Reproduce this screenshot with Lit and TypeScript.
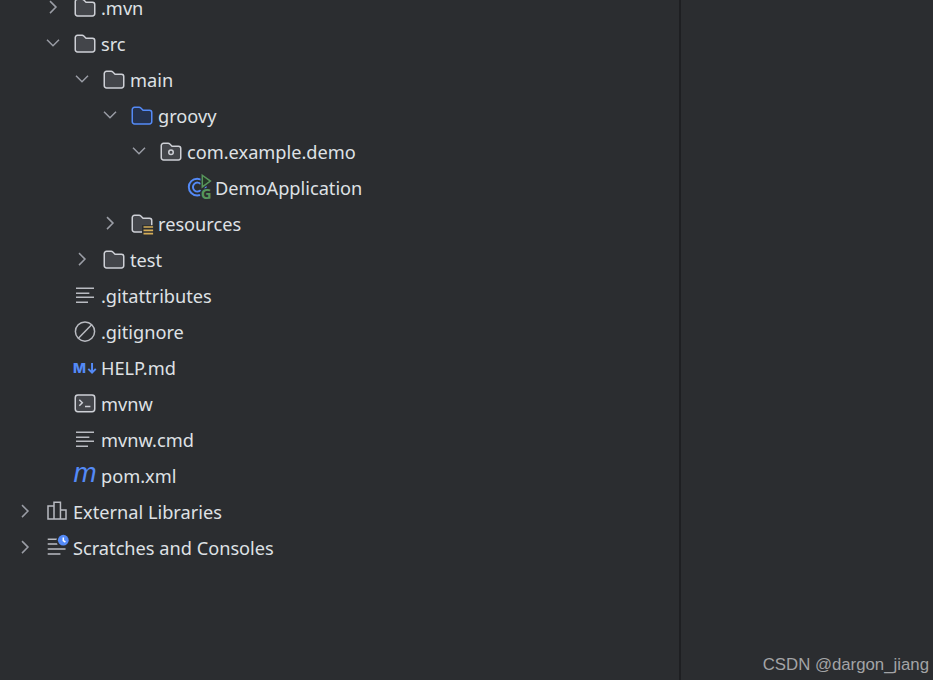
import { LitElement, css, html, svg } from "lit";
import { customElement } from "lit/decorators.js";

const folderPath = "M3 2.2h3.1c.4 0 .8.2 1.1.5l1.5 1.5H13a1.5 1.5 0 0 1 1.5 1.5v6.1a1.5 1.5 0 0 1-1.5 1.5H3a1.5 1.5 0 0 1-1.5-1.5V3.7A1.5 1.5 0 0 1 3 2.2z";

const folder = (extra = svg``, cls = "grey") => svg`<path class=${cls} d=${folderPath}/>${extra}`;

const lines = svg`<path class="line" d="M2 2.9h12M2 6.2h8.9M2 8.9h12M2 12.2h8"/>`;

const icons: Record<string, unknown> = {
  folder: folder(),
  source: folder(svg``, "blue"),
  package: folder(svg`<circle class="ring" cx="8" cy="8.2" r="1.5"/>`),
  resources: svg`${folder()}
    <path class="cut" d="M8 8.8h8v7H8z"/>
    <path class="yellow" d="M9 10h6.4M9 12.2h6.4M9 14.4h6.4"/>`,
  groovy: svg`
    <circle class="c-blue" cx="6.8" cy="7.4" r="5.6"/>
    <path class="c-blue" d="M9.2 5.4a3 3 0 1 0 0 4"/>
    <path class="green-cut" d="M10.2-.5l5.4 3.9-5.4 3.9z"/>
    <circle class="cut" cx="12.8" cy="12.2" r="4.2"/>
    <path class="green" d="M10.2-.5l5.4 3.9-5.4 3.9z"/>
    <text class="g-letter" x="12.8" y="15.6">G</text>`,
  lines,
  ignore: svg`<circle class="line" cx="8" cy="7.7" r="6.4"/><path class="line" d="M3.6 12.2l8.8-9"/>`,
  markdown: svg`<text class="md" x="0" y="11.2">M</text><path class="md-arrow" d="M12.7 4.6v6.4M10.2 8.6l2.5 2.5 2.5-2.5"/>`,
  terminal: svg`<rect class="grey" x="1.5" y="2" width="13" height="11.2" rx="1.8"/>
    <path class="prompt" d="M4.2 5.2l2 2-2 2M8 9.7h3.6"/>`,
  maven: svg`<text class="maven" x="8" y="12" text-anchor="middle">m</text>`,
  libs: svg`<path class="line" d="M2 4h4v8.6H2zM6 1.5h4.3v11.1H6zM10.3 6.7H14v5.9h-3.7z"/>`,
  scratch: svg`<path class="line" d="M1.8 2.2h6.5M1.8 5.4h6.5M1.8 8.7h11.9M1.8 12h8.5"/>
    <circle class="cut" cx="12.2" cy="2.8" r="4.6"/>
    <circle class="clock" cx="12.2" cy="2.8" r="3.6"/>
    <path class="hands" d="M12.2 1v2.1l1.4.9"/>`,
};

interface Row {
  level: number;
  name: string;
  icon: string;
  arrow?: "open" | "closed";
}

const rows: Row[] = [
  { level: 1, name: ".mvn", icon: "folder", arrow: "closed" },
  { level: 1, name: "src", icon: "folder", arrow: "open" },
  { level: 2, name: "main", icon: "folder", arrow: "open" },
  { level: 3, name: "groovy", icon: "source", arrow: "open" },
  { level: 4, name: "com.example.demo", icon: "package", arrow: "open" },
  { level: 5, name: "DemoApplication", icon: "groovy" },
  { level: 3, name: "resources", icon: "resources", arrow: "closed" },
  { level: 2, name: "test", icon: "folder", arrow: "closed" },
  { level: 1, name: ".gitattributes", icon: "lines" },
  { level: 1, name: ".gitignore", icon: "ignore" },
  { level: 1, name: "HELP.md", icon: "markdown" },
  { level: 1, name: "mvnw", icon: "terminal" },
  { level: 1, name: "mvnw.cmd", icon: "lines" },
  { level: 1, name: "pom.xml", icon: "maven" },
  { level: 0, name: "External Libraries", icon: "libs", arrow: "closed" },
  { level: 0, name: "Scratches and Consoles", icon: "scratch", arrow: "closed" },
];

@customElement("app-root")
export class AppRoot extends LitElement {
  static styles = css`
    :host {
      display: block;
      position: relative;
      height: 680px;
      overflow: hidden;
      background: #2b2d30;
      color: #dfe1e5;
      font-family: "Noto Sans", sans-serif;
      font-size: 18.2px;
    }

    .layout {
      display: grid;
      grid-template-columns: 679px 2px 1fr;
      height: 100%;
    }

    .divider {
      background: #1e1f22;
    }

    .tree {
      margin-top: -10px;
    }

    .row {
      display: flex;
      align-items: center;
      height: 36px;
      white-space: nowrap;
    }

    .arrow, .icon {
      flex: none;
      width: 24px;
      height: 24px;
      overflow: visible;
    }

    .arrow {
      margin-right: 8px;
      fill: none;
      stroke: #9a9da5;
      stroke-width: 1;
    }

    .icon {
      margin-right: 4px;
    }

    .icon * {
      fill: none;
      stroke-width: 1;
    }

    .icon .grey { fill: #43454a; stroke: #ced0d6; }
    .icon .blue { fill: #25324d; stroke: #548af7; }
    .icon .ring { stroke: #ced0d6; }
    .icon .line { stroke: #b9bbc1; }
    .icon .cut { fill: #2b2d30; }
    .icon .green-cut { stroke: #2b2d30; stroke-width: 2.4; fill: #2b2d30; }
    .icon .yellow { stroke: #d6ae58; stroke-width: 1.1; }
    .icon .c-blue { stroke: #548af7; stroke-width: 1.3; }
    .icon .green { stroke: #57965c; fill: #253627; }
    .icon .prompt { stroke: #ced0d6; }
    .icon .hands { stroke: #fff; stroke-width: 1; }
    .icon .clock { fill: #548af7; }
    .icon .md-arrow { stroke: #548af7; stroke-width: 1.3; }

    .icon text {
      stroke: none;
    }

    .icon .md {
      fill: #548af7;
      font: 800 9.2px Inter, sans-serif;
    }

    .icon .g-letter {
      fill: #57965c;
      font: 700 10px "Noto Sans", sans-serif;
      text-anchor: middle;
    }

    .icon .maven {
      fill: #548af7;
      font: italic 400 18.5px "Liberation Sans", sans-serif;
    }

    .watermark {
      position: absolute;
      right: 4px;
      bottom: 5px;
      color: #a3a4a6;
      font-family: "Liberation Sans", sans-serif;
      font-size: 16.8px;
    }
  `;

  renderArrow(arrow?: "open" | "closed") {
    if (!arrow) return html`<span class="arrow"></span>`;
    const d = arrow === "open" ? "M4 5.2l4 4 4-4" : "M6 3.4l4 4-4 4";
    return html`<svg class="arrow" viewBox="0 0 16 16"><path d=${d}/></svg>`;
  }

  render() {
    return html`
      <div class="layout">
        <div class="tree">
          ${rows.map((row) => html`
            <div class="row" style="padding-left:${Math.round(12.5 + row.level * 28.5)}px">
              ${this.renderArrow(row.arrow)}
              <svg class="icon" viewBox="0 0 16 16">${icons[row.icon]}</svg>
              <span>${row.name}</span>
            </div>
          `)}
        </div>
        <div class="divider"></div>
        <div></div>
      </div>
      <div class="watermark">CSDN @dargon_jiang</div>
    `;
  }
}
